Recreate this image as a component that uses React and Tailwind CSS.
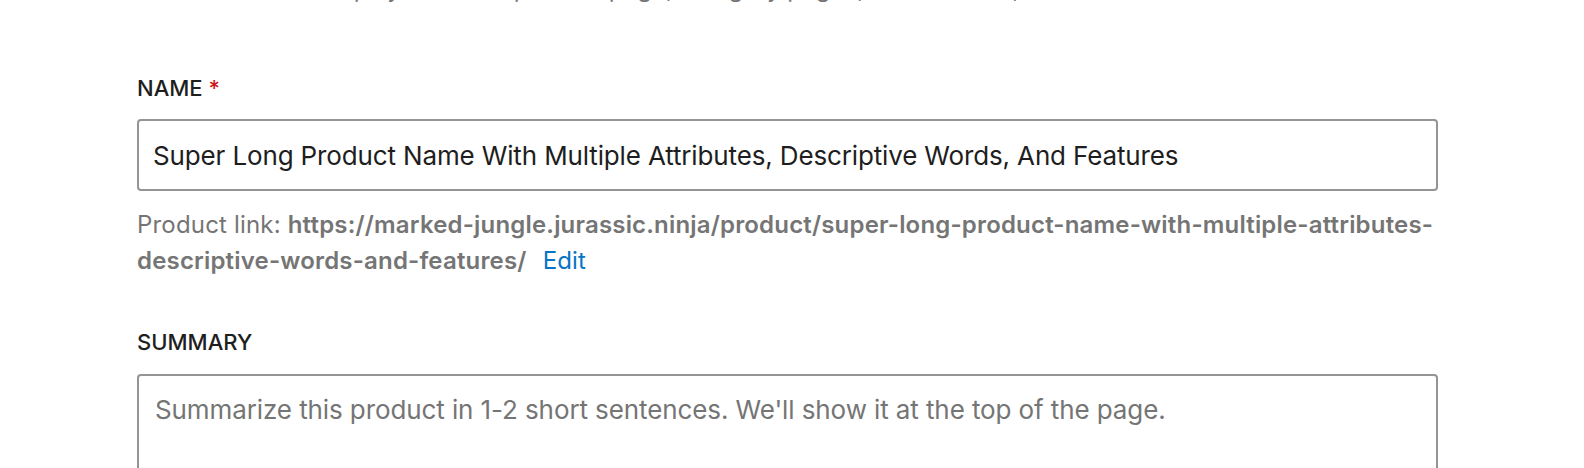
export default function App() {
  const font = { fontFamily: 'Inter, "Noto Sans", sans-serif' };
  return (
    <div className="w-full h-[468px] overflow-hidden bg-white" style={font}>
      <div className="pl-[137px] pt-px">
        <div className="w-[1301px]">
          <p className="mt-[-28px] text-[24px] leading-[32px] text-[#757575]">
            This info will be displayed on the product page, category pages, social media, and search results.
          </p>

          <div className="mt-[67px]">
            <label className="block text-[22px] leading-[32px] font-medium uppercase text-[#1e1e1e]">
              Name <span className="text-[#cc1818]">*</span>
            </label>
            <input
              readOnly
              defaultValue="Super Long Product Name With Multiple Attributes, Descriptive Words, And Features"
              className="mt-[15px] block w-full h-[72px] rounded-[4px] border-2 border-[#949494] px-[14px] text-[26px] tracking-[-0.14px] text-[#1e1e1e] outline-none"
            />
            <p className="mt-[16px] text-[24px] leading-[36px] tracking-[0.18px] text-[#757575]">
              Product link:{" "}
              <span className="font-semibold">
                https://marked-jungle.jurassic.ninja/product/super-long-product-name-with-multiple-attributes-
                <br />
                descriptive-words-and-features/
              </span>
              <button className="ml-[16px] text-[#0675c4] cursor-pointer">Edit</button>
            </p>
          </div>

          <div className="mt-[47px]">
            <label className="block text-[22px] leading-[32px] font-medium uppercase text-[#1e1e1e]">
              Summary
            </label>
            <textarea
              readOnly
              placeholder="Summarize this product in 1-2 short sentences. We'll show it at the top of the page."
              className="mt-[16px] block w-full h-[120px] resize-none rounded-[4px] border-2 border-[#949494] px-[16px] py-[16px] text-[26px] leading-[36px] tracking-[-0.1px] text-[#1e1e1e] placeholder:text-[#757575] outline-none"
            />
          </div>
        </div>
      </div>
    </div>
  );
}
